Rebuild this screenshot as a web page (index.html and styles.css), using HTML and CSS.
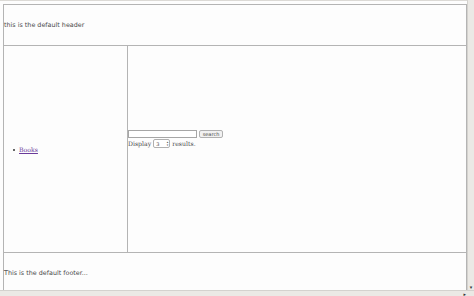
FILE: index.html
```html
<!DOCTYPE html>
<html lang="en">
<head>
    <meta charset="UTF-8">
    <title>Default layout</title>
    <link rel="stylesheet" href="styles.css">
</head>
<body>

    <div class="window">
        <div class="viewport">
            <div class="page">
                <div class="layout">
                    <!-- Header -->
                    <div class="cell header">this is the default header</div>

                    <!-- Side menu -->
                    <div class="cell menu">
                        <ul>
                            <li><a href="#">Books</a></li>
                        </ul>
                    </div>

                    <!-- Search -->
                    <div class="cell content">
                        <form class="search">
                            <div class="search-row">
                                <input type="text" class="search-box">
                                <button type="button" class="search-btn">search</button>
                            </div>
                            <div class="display-row">
                                Display
                                <span class="spin">3 <span class="arrows">&#9652;<br>&#9662;</span></span>
                                results.
                            </div>
                        </form>
                    </div>

                    <!-- Footer -->
                    <div class="cell footer">This is the default footer...</div>
                </div>
            </div>
            <div class="vscroll"><span class="arrow-down">&#9662;</span></div>
        </div>
        <div class="hscroll"><span class="arrow-right">&#9656;</span></div>
    </div>

</body>
</html>
```

FILE: styles.css
```css
* {
    margin: 0;
    padding: 0;
    box-sizing: border-box;
}

body {
    width: 474px;
    height: 296px;
    overflow: hidden;
    background-color: #ebe9e5;
    font-family: "DejaVu Sans", sans-serif;
    color: #4a4a4a;
}

.window {
    display: flex;
    flex-direction: column;
    height: 296px;
}

.viewport {
    display: flex;
    flex: 1;
    min-height: 0;
}

.page {
    flex: 1;
    padding: 3px 0 0 3px;
    background-color: #fdfdfd;
    overflow: hidden;
    border-top: 1px solid #dcdad6;
}

.layout {
    display: grid;
    grid-template-columns: 124px 1fr;
    grid-template-rows: 41px 207px 60px;
    border-top: 1px solid #b4b4b4;
    border-left: 1px solid #b4b4b4;
    border-right: 1px solid #b4b4b4;
}

.cell {
    display: flex;
    align-items: center;
    font-size: 6.4px;
}

.header {
    grid-column: 1 / 3;
    border-bottom: 1px solid #b4b4b4;
}

.menu {
    border-right: 1px solid #b4b4b4;
    border-bottom: 1px solid #b4b4b4;
    font-family: "DejaVu Serif", serif;
    font-size: 6.2px;
    padding-top: 1px;
}

.menu ul {
    list-style: none;
    padding-left: 9px;
}

.menu li {
    display: flex;
    align-items: center;
}

.menu li::before {
    content: "";
    width: 2px;
    height: 2px;
    border-radius: 50%;
    background: #333;
    margin-right: 4px;
}

.menu a {
    color: #6a3a9a;
}

.content {
    border-bottom: 1px solid #b4b4b4;
    font-family: "DejaVu Serif", serif;
    font-size: 6.2px;
    align-items: flex-start;
    padding-top: 84px;
}

.search-row {
    display: flex;
    align-items: center;
    gap: 2px;
}

.search-box {
    width: 69px;
    height: 8px;
    border: 1px solid #a6a6a6;
    background: #fff;
}

.search-btn {
    font-family: "DejaVu Sans", sans-serif;
    font-size: 5px;
    height: 8px;
    width: 24px;
    border: 1px solid #b0b0b0;
    border-radius: 2px;
    background: #f1f1f1;
    color: #444;
    line-height: 5px;
}

.display-row {
    display: flex;
    align-items: center;
    gap: 2px;
    margin-top: 1px;
}

.spin {
    display: inline-flex;
    align-items: center;
    justify-content: space-between;
    width: 17px;
    height: 9px;
    padding: 0 1px 0 2px;
    border: 1px solid #b0b0b0;
    border-radius: 2px;
    background: #fff;
    font-size: 5px;
}

.arrows {
    font-size: 3px;
    line-height: 3px;
}

.footer {
    grid-column: 1 / 3;
    align-items: flex-start;
    padding-top: 16px;
}

.vscroll {
    width: 7px;
    background-color: #ebe9e5;
    border-left: 1px solid #d4d2ce;
    display: flex;
    flex-direction: column;
    justify-content: flex-end;
    align-items: center;
    font-size: 5px;
    color: #333;
}

.hscroll {
    height: 6px;
    background-color: #ebe9e5;
    border-top: 1px solid #d4d2ce;
    display: flex;
    justify-content: flex-end;
    align-items: center;
    padding-right: 8px;
    font-size: 5px;
    color: #333;
}
```
